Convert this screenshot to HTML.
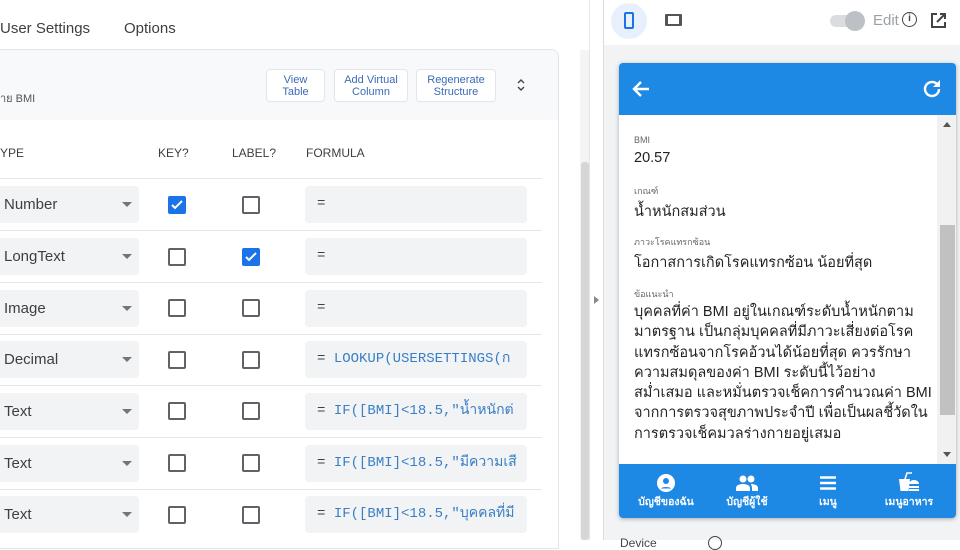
<!DOCTYPE html>
<html><head><meta charset="utf-8"><style>
*{margin:0;padding:0;box-sizing:border-box}
body{width:960px;height:540px;overflow:hidden;background:#fff;font-family:"Liberation Sans","Noto Sans CJK SC",sans-serif;position:relative;color:#3c4043}
.a{position:absolute}
.tab{top:20px;font-size:15px;color:#3c4043}
.btn{top:69px;height:33px;background:#fff;border:1px solid #e3e5e8;border-radius:4px;color:#3b6bb5;font-size:11px;text-align:center;line-height:12px;padding-top:4px}
.hd{top:146px;font-size:12px;color:#3c4043}
.sep{left:0;width:542px;height:1px;background:#e6e7e9}
.dd{left:-6px;width:145px;height:37px;background:#f1f3f4;border-radius:4px;font-size:15px;line-height:37px;padding-left:10px;color:#3c4043}
.dd:after{content:"";position:absolute;right:7px;top:16px;border:5px solid transparent;border-top:5px solid #757575}
.cb{width:18px;height:18px;border:2px solid #5f6368;border-radius:2px}
.cb.on{background:#1a73e8;border-color:#1a73e8}
.fm{left:305px;width:222px;height:37px;background:#f1f3f4;border-radius:4px;font-family:"Liberation Mono",monospace;font-size:14px;line-height:37px;padding-left:12px;color:#3c4043;overflow:hidden;white-space:nowrap}
.fm b{font-weight:normal;color:#3a7fc4}
.lb{left:634px;font-size:9px;color:#666}
.vl{left:634px;font-size:14.5px;color:#222}
.nv{top:495px;font-size:10.5px;color:#fff;font-weight:bold;text-align:center;width:90px;line-height:14px}
</style></head><body>
<div class="a tab" style="left:0">User Settings</div>
<div class="a tab" style="left:124px">Options</div>
<div class="a" style="left:0;top:49px;width:559px;height:500px;border:1px solid #e3e5e8;border-left:none;border-radius:0 8px 0 0;background:#fff"></div>
<div class="a" style="left:0;top:50px;width:558px;height:70px;background:#f8f9fa;border-radius:0 8px 0 0"></div>
<div class="a" style="left:0;top:89px;font-size:11px;color:#555">าย BMI</div>
<div class="a btn" style="left:266px;width:59px">View<br>Table</div>
<div class="a btn" style="left:334px;width:74px">Add Virtual<br>Column</div>
<div class="a btn" style="left:416px;width:80px">Regenerate<br>Structure</div>
<svg class="a" style="left:516px;top:78px" width="10" height="14" viewBox="0 0 10 14"><path d="M2 5l3-3 3 3M2 9l3 3 3-3" stroke="#444" stroke-width="1.4" fill="none"/></svg>
<div class="a hd" style="left:0">YPE</div>
<div class="a hd" style="left:158px">KEY?</div>
<div class="a hd" style="left:232px">LABEL?</div>
<div class="a hd" style="left:306px">FORMULA</div>
<div class="a sep" style="top:178px"></div>
<div class="a sep" style="top:230px"></div>
<div class="a sep" style="top:282px"></div>
<div class="a sep" style="top:334px"></div>
<div class="a sep" style="top:385px"></div>
<div class="a sep" style="top:437px"></div>
<div class="a sep" style="top:489px"></div>

<div class="a dd" style="top:186px">Number</div>
<div class="a dd" style="top:238px">LongText</div>
<div class="a dd" style="top:290px">Image</div>
<div class="a dd" style="top:341px">Decimal</div>
<div class="a dd" style="top:393px">Text</div>
<div class="a dd" style="top:445px">Text</div>
<div class="a dd" style="top:496px">Text</div>

<div class="a cb on" style="left:168px;top:196px"><svg width="14" height="14" viewBox="0 0 14 14"><path d="M2 7l3 3 7-7" stroke="#fff" stroke-width="2" fill="none"/></svg></div>
<div class="a cb" style="left:242px;top:196px"></div>
<div class="a cb" style="left:168px;top:248px"></div>
<div class="a cb on" style="left:242px;top:248px"><svg width="14" height="14" viewBox="0 0 14 14"><path d="M2 7l3 3 7-7" stroke="#fff" stroke-width="2" fill="none"/></svg></div>
<div class="a cb" style="left:168px;top:299px"></div><div class="a cb" style="left:242px;top:299px"></div>
<div class="a cb" style="left:168px;top:351px"></div><div class="a cb" style="left:242px;top:351px"></div>
<div class="a cb" style="left:168px;top:402px"></div><div class="a cb" style="left:242px;top:402px"></div>
<div class="a cb" style="left:168px;top:454px"></div><div class="a cb" style="left:242px;top:454px"></div>
<div class="a cb" style="left:168px;top:506px"></div><div class="a cb" style="left:242px;top:506px"></div>

<div class="a fm" style="top:186px">=</div>
<div class="a fm" style="top:238px">=</div>
<div class="a fm" style="top:290px">=</div>
<div class="a fm" style="top:341px">= <b>LOOKUP(USERSETTINGS(ก</b></div>
<div class="a fm" style="top:393px">= <b>IF([BMI]&lt;18.5,"น้ำหนักต่</b></div>
<div class="a fm" style="top:445px">= <b>IF([BMI]&lt;18.5,"มีความเสี</b></div>
<div class="a fm" style="top:496px">= <b>IF([BMI]&lt;18.5,"บุคคลที่มี</b></div>

<div class="a" style="left:580px;top:50px;width:10px;height:490px;background:#f4f4f4"></div>
<div class="a" style="left:581px;top:162px;width:8px;height:378px;background:#d6d6d6;border-radius:3px"></div>
<div class="a" style="left:589px;top:0;width:1px;height:540px;background:#e6e6e6"></div>
<div class="a" style="left:594px;top:296px;border:4px solid transparent;border-left:5px solid #888"></div>
<div class="a" style="left:603px;top:0;width:1px;height:540px;background:#dadce0"></div>

<div class="a" style="left:604px;top:45px;width:356px;height:495px;background:#f1f3f4"></div>
<div class="a" style="left:611px;top:3px;width:36px;height:36px;border-radius:50%;background:#e8f0fe"></div>
<div class="a" style="left:624px;top:12px;width:10px;height:17px;border:2px solid #1a73e8;border-radius:2px"></div>
<div class="a" style="left:665px;top:14px;width:17px;height:12px;border:2px solid #555;border-left-width:3px;border-right-width:3px;border-radius:1px"></div>
<div class="a" style="left:830px;top:15px;width:32px;height:12px;border-radius:6px;background:#dadce0"></div>
<div class="a" style="left:845px;top:11px;width:20px;height:20px;border-radius:50%;background:#bdc1c6"></div>
<div class="a" style="left:873px;top:12px;font-size:15px;color:#9aa0a6">Edit</div>
<div class="a" style="left:902px;top:12px;width:15px;height:15px;border:1.5px solid #444;border-radius:50%;font-size:10px;font-weight:bold;text-align:center;line-height:12px;color:#444">i</div>
<svg class="a" style="left:930px;top:12px" width="17" height="17" viewBox="0 0 17 17"><path d="M7 2H2v13h13v-5M10 2h5v5M15 2L7 10" stroke="#444" stroke-width="2" fill="none"/></svg>

<div class="a" style="left:619px;top:63px;width:337px;height:455px;border-radius:4px;background:#fff;box-shadow:0 1px 4px rgba(0,0,0,.3);overflow:hidden">
<div class="a" style="left:0;top:0;width:337px;height:52px;background:#1e88e5"></div>
<svg class="a" style="left:12px;top:16px" width="20" height="20" viewBox="0 0 20 20"><path d="M18 10H3M10 3l-7 7 7 7" stroke="#fff" stroke-width="2.4" fill="none"/></svg>
<svg class="a" style="left:302px;top:15px" width="22" height="22" viewBox="0 0 22 22"><path d="M18 11a7 7 0 1 1-2.2-5.1" stroke="#fff" stroke-width="2.4" fill="none"/><path d="M19 2v7h-7z" fill="#fff"/></svg>
<div class="a" style="left:318px;top:52px;width:19px;height:349px;background:#f1f1f1"></div>
<div class="a" style="left:321px;top:162px;width:15px;height:190px;background:#c1c1c1"></div>
<div class="a" style="left:324px;top:59px;border:4px solid transparent;border-bottom:5px solid #555;border-top:none"></div>
<div class="a" style="left:324px;top:389px;border:4px solid transparent;border-top:5px solid #555;border-bottom:none"></div>
<div class="a" style="left:0;top:401px;width:337px;height:54px;background:#1e88e5"></div>
</div>
<div class="a lb" style="top:135px">BMI</div>
<div class="a vl" style="top:150px">20.57</div>
<div class="a lb" style="top:184px">เกณฑ์</div>
<div class="a vl" style="top:200px">น้ำหนักสมส่วน</div>
<div class="a lb" style="top:235px">ภาวะโรคแทรกซ้อน</div>
<div class="a vl" style="top:251px">โอกาสการเกิดโรคแทรกซ้อน น้อยที่สุด</div>
<div class="a lb" style="top:287px">ข้อแนะนำ</div>
<div class="a vl" style="top:302px;width:300px;line-height:20.3px">บุคคลที่ค่า BMI อยู่ในเกณฑ์ระดับน้ำหนักตาม มาตรฐาน เป็นกลุ่มบุคคลที่มีภาวะเสี่ยงต่อโรค แทรกซ้อนจากโรคอ้วนได้น้อยที่สุด ควรรักษา ความสมดุลของค่า BMI ระดับนี้ไว้อย่าง สม่ำเสมอ และหมั่นตรวจเช็คการคำนวณค่า BMI จากการตรวจสุขภาพประจำปี เพื่อเป็นผลชี้วัดใน การตรวจเช็คมวลร่างกายอยู่เสมอ</div>

<svg class="a" style="left:657px;top:474px" width="18" height="18" viewBox="0 0 18 18"><circle cx="9" cy="9" r="9" fill="#fff"/><circle cx="9" cy="7" r="3" fill="#1e88e5"/><path d="M3.5 14.5a7 4 0 0 1 11 0" fill="#1e88e5"/></svg>
<svg class="a" style="left:736px;top:475px" width="22" height="16" viewBox="0 0 22 16"><circle cx="7" cy="4" r="3.5" fill="#fff"/><circle cx="15" cy="4" r="3.5" fill="#fff"/><path d="M0 16v-3c0-3 4-4 7-4s7 1 7 4v3zM15 9c3 0 7 1 7 4v3h-6v-3c0-2-1-3-1-4z" fill="#fff"/></svg>
<svg class="a" style="left:820px;top:476px" width="16" height="14" viewBox="0 0 16 14"><path d="M0 1.5h16M0 7h16M0 12.5h16" stroke="#fff" stroke-width="2.4"/></svg>
<svg class="a" style="left:898px;top:472px" width="22" height="20" viewBox="0 0 22 20"><path d="M1 7h11l-1.5 12h-8z" fill="#fff"/><path d="M7 7l2-6h5" stroke="#fff" stroke-width="1.6" fill="none"/><path d="M11 12a5 4 0 0 1 10 0z M11 14h10v2h-10zM11 17h10v2h-10z" fill="#fff"/></svg>
<div class="a nv" style="left:621px">บัญชีของฉัน</div>
<div class="a nv" style="left:702px">บัญชีผู้ใช้</div>
<div class="a nv" style="left:783px">เมนู</div>
<div class="a nv" style="left:864px">เมนูอาหาร</div>
<div class="a" style="left:620px;top:536px;font-size:12px;color:#444">Device</div>
<div class="a" style="left:708px;top:536px;width:14px;height:14px;border:1.5px solid #444;border-radius:50%"></div>
</body></html>
